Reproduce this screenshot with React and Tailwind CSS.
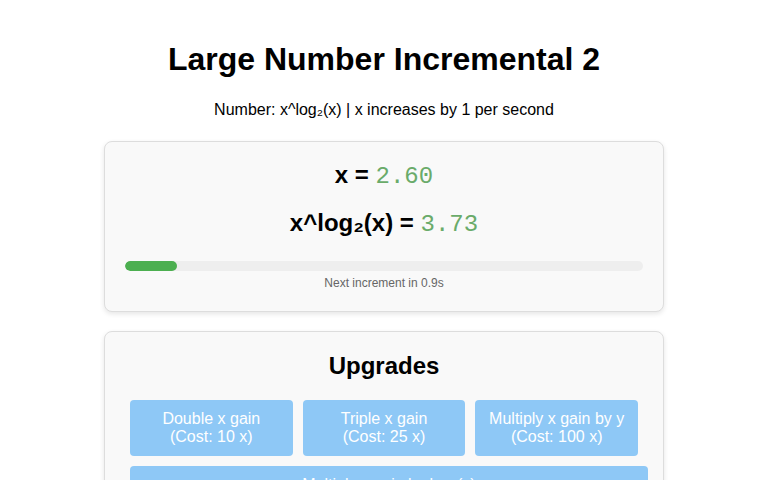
export default function App() {
  const upgrades = [
    ["Double x gain", "(Cost: 10 x)"],
    ["Triple x gain", "(Cost: 25 x)"],
    ["Multiply x gain by y", "(Cost: 100 x)"],
  ];

  return (
    <div
      className="min-h-screen bg-white text-black"
      style={{ fontFamily: "'Liberation Sans', Arial, sans-serif" }}
    >
      <div className="mx-auto w-[560px] pt-[41px]">
        <h1 className="text-center text-[32px] font-bold leading-[37px]">
          Large Number Incremental 2
        </h1>
        <p className="mt-[23px] text-center text-[16px] leading-[18px]">
          Number: x^log₂(x) | x increases by 1 per second
        </p>

        {/* Number panel */}
        <div className="mt-[22px] rounded-lg border border-[#ddd] bg-[#f9f9f9] px-[20px] pt-[19px] pb-[21px] shadow-[0_2px_5px_rgba(0,0,0,0.1)]">
          <div className="text-center text-[24px] font-bold leading-[28px]">
            x ={" "}
            <span className="font-['Liberation_Mono',monospace] font-normal text-[#6aab6a]">
              2.60
            </span>
          </div>
          <div className="mt-[18px] text-center text-[24px] font-bold leading-[28px]">
            x^log₂(x) ={" "}
            <span className="font-['Liberation_Mono',monospace] font-normal text-[#6aab6a]">
              3.73
            </span>
          </div>
          <div className="mt-[22px] h-[10px] w-full overflow-hidden rounded-[5px] bg-[#eee]">
            <div className="h-full rounded-[5px] bg-[#4caf50]" style={{ width: "10%" }} />
          </div>
          <div className="mt-[5px] text-center text-[12px] leading-[14px] text-[#666]">
            Next increment in 0.9s
          </div>
        </div>

        {/* Upgrades panel */}
        <div className="mt-[19px] rounded-lg border border-[#ddd] bg-[#f9f9f9] px-[20px] pt-[20px] pb-[20px] shadow-[0_2px_5px_rgba(0,0,0,0.1)]">
          <h2 className="text-center text-[24px] font-bold leading-[28px]">Upgrades</h2>
          <div className="mt-[15px] flex flex-wrap">
            {upgrades.map(([a, b]) => (
              <button
                key={a}
                disabled
                className="m-[5px] flex-1 rounded-[4px] bg-[#8ec8f6] px-[10px] py-[10px] text-[16px] leading-[18px] text-white"
              >
                {a}
                <br />
                {b}
              </button>
            ))}
            <button
              disabled
              className="m-[5px] w-full shrink-0 rounded-[4px] bg-[#8ec8f6] px-[10px] py-[10px] text-[16px] leading-[18px] text-white"
            >
              Multiply y gain by log₂(x)
              <br />
              (Cost: 1000 x)
            </button>
          </div>
        </div>
      </div>
    </div>
  );
}
